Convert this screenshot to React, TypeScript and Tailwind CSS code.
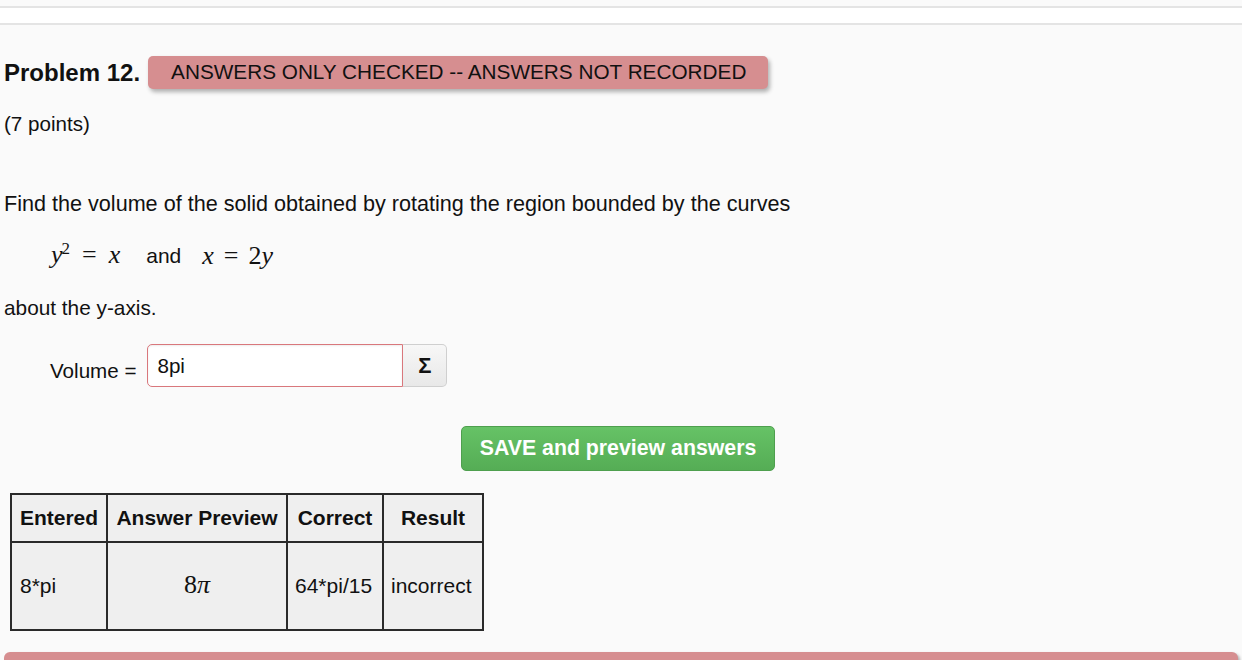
import React from "react";

export default function App() {
  const sans = { fontFamily: '"Liberation Sans", Arial, sans-serif' };
  const serif = { fontFamily: '"Liberation Serif", "Times New Roman", serif' };
  return (
    <div className="w-[1242px] h-[660px] bg-[#fafafa] overflow-hidden text-[#111]" style={sans}>
      <div className="h-[6px]" />
      <div className="h-[19px] bg-white border-y-2 border-[#e4e4e4]" />
      <div className="pl-[4px]">
        <div className="mt-[31px] flex items-center h-[33px]">
          <span className="text-[24px] font-bold leading-none">Problem 12.</span>
          <span className="ml-[8px] h-[33px] w-[620px] rounded-[5px] bg-[#d68e90] shadow-[2px_3px_4px_rgba(0,0,0,0.3)] flex items-center pl-[23px] text-[20.75px] leading-none">
            ANSWERS ONLY CHECKED -- ANSWERS NOT RECORDED
          </span>
        </div>
        <div className="mt-[23px] h-[24px] leading-[24px] text-[20.6px]">(7 points)</div>
        <div className="mt-[56px] h-[24px] leading-[24px] text-[21.6px]">
          Find the volume of the solid obtained by rotating the region bounded by the curves
        </div>
        <div className="mt-[28px] h-[24px] leading-[24px] flex items-center pl-[47px] text-[21px]">
          <span className="text-[26px] italic whitespace-nowrap" style={serif}>
            y<span className="inline-block not-italic text-[17px] relative -top-[9px] -ml-[1px]">2</span>
            <span className="not-italic mx-[12px]">=</span>x
          </span>
          <span className="ml-[26px]">and</span>
          <span className="ml-[21px] text-[26px] italic whitespace-nowrap" style={serif}>
            x<span className="not-italic mx-[10px]">=</span>
            <span className="not-italic">2</span>y
          </span>
        </div>
        <div className="mt-[28px] h-[24px] leading-[24px] text-[20.8px]">about the y-axis.</div>
        <div className="mt-[24px] flex items-center h-[43px]">
          <span className="ml-[46px] text-[20.6px] leading-none mt-[12px]">Volume =</span>
          <div className="ml-[11px] h-[43px] w-[256px] bg-white border border-[#d9777c] rounded-l-[5px] shadow-[inset_0_1px_2px_rgba(0,0,0,0.08)] flex items-center pl-[9px] text-[20.6px] pt-[1px]">
            8pi
          </div>
          <div className="h-[43px] w-[44px] bg-gradient-to-b from-[#f7f7f7] to-[#e8e8e8] border border-l-0 border-[#cfcfcf] rounded-r-[5px] flex items-center justify-center text-[22px] font-bold">
            Σ
          </div>
        </div>
        <div className="mt-[39px] ml-[457px] h-[45px] w-[314px] rounded-[5px] bg-gradient-to-b from-[#66c266] to-[#55ad55] border border-[#4e9f4e] flex items-center justify-center text-white text-[21.3px] font-bold">
          SAVE and preview answers
        </div>
        <table className="mt-[22px] ml-[6px] border-collapse text-[21px] bg-[#efefef]">
          <tbody>
            <tr className="h-[48px]">
              <th className="w-[96px] border-2 border-[#2a2a2a] font-bold">Entered</th>
              <th className="w-[180px] border-2 border-[#2a2a2a] font-bold">Answer Preview</th>
              <th className="w-[96px] border-2 border-[#2a2a2a] font-bold">Correct</th>
              <th className="w-[100px] border-2 border-[#2a2a2a] font-bold">Result</th>
            </tr>
            <tr className="h-[88px]">
              <td className="border-2 border-[#2a2a2a] pl-[8px]">8*pi</td>
              <td className="border-2 border-[#2a2a2a] text-center text-[26px] pb-[4px]" style={serif}>
                8<i>π</i>
              </td>
              <td className="border-2 border-[#2a2a2a] pl-[7px]">64*pi/15</td>
              <td className="border-2 border-[#2a2a2a] pl-[7px]">incorrect</td>
            </tr>
          </tbody>
        </table>
      </div>
      <div className="mt-[21px] mx-[4px] h-[20px] rounded-t-[6px] bg-[#d68e90] shadow-[2px_2px_3px_rgba(0,0,0,0.3)]" />
    </div>
  );
}
